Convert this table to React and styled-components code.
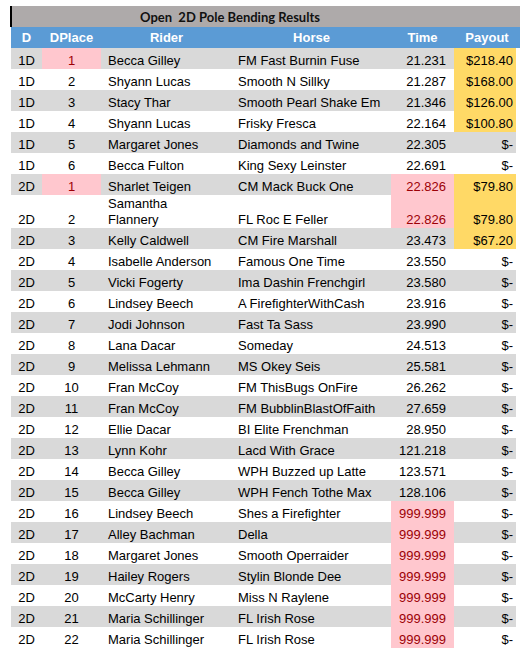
import React from 'react'
import styled, { createGlobalStyle } from 'styled-components'

const GlobalStyle = createGlobalStyle`
  body {
    margin: 0;
    background: #fff;
    font-family: "Liberation Sans", Arial, sans-serif;
  }
`

const COLS = '31px 59px 131px 159px 63px'

const Page = styled.div`
  padding: 6px 0 0 11px;
  width: 520px;
  box-sizing: border-box;
`

const Title = styled.div`
  height: 21px;
  margin-left: -1px;
  border-left: 2px solid #000;
  background: #aeaaaa;
  display: flex;
  align-items: center;
  padding-left: 128px;
  font-family: Lato, "Open Sans", sans-serif;
  font-weight: 700;
  font-size: 13px;
  color: #111;
  white-space: pre;
`

const HeadRow = styled.div`
  display: grid;
  grid-template-columns: ${COLS} 66px;
  height: 21px;
  background: #5b9bd5;
`

const HeadCell = styled.div`
  display: flex;
  align-items: center;
  justify-content: center;
  color: #fff;
  font-weight: 700;
  font-size: 13px;
  line-height: 16px;
`

const Row = styled.div`
  display: grid;
  grid-template-columns: ${COLS} 62px;
  width: 505px;
  height: ${p => (p.$tall ? 33 : 21)}px;
  background: ${p => (p.$shade ? '#d9d9d9' : '#fff')};
`

const Cell = styled.div`
  display: flex;
  align-items: flex-end;
  justify-content: ${p => p.$align || 'flex-start'};
  padding: ${p => p.$pad || '0'};
  font-size: 13px;
  line-height: 16px;
  color: ${p => (p.$mark === 'bad' ? '#9c0006' : '#000')};
  background: ${p =>
    p.$mark === 'bad' ? '#ffc7ce' : p.$mark === 'pay' ? '#ffd966' : 'transparent'};
  white-space: nowrap;
  overflow: hidden;
`

const RiderCell = styled(Cell)`
  flex-direction: column;
  align-items: flex-start;
  justify-content: flex-end;
`

const results = [
  ['1D', 1, 'Becca Gilley', 'FM Fast Burnin Fuse', '21.231', '$218.40'],
  ['1D', 2, 'Shyann Lucas', 'Smooth N Sillky', '21.287', '$168.00'],
  ['1D', 3, 'Stacy Thar', 'Smooth Pearl Shake Em', '21.346', '$126.00'],
  ['1D', 4, 'Shyann Lucas', 'Frisky Fresca', '22.164', '$100.80'],
  ['1D', 5, 'Margaret Jones', 'Diamonds and Twine', '22.305', null],
  ['1D', 6, 'Becca Fulton', 'King Sexy Leinster', '22.691', null],
  ['2D', 1, 'Sharlet Teigen', 'CM Mack Buck One', '22.826', '$79.80'],
  ['2D', 2, 'Samantha\nFlannery', 'FL Roc E Feller', '22.826', '$79.80'],
  ['2D', 3, 'Kelly Caldwell', 'CM Fire Marshall', '23.473', '$67.20'],
  ['2D', 4, 'Isabelle Anderson', 'Famous One Time', '23.550', null],
  ['2D', 5, 'Vicki Fogerty', 'Ima Dashin Frenchgirl', '23.580', null],
  ['2D', 6, 'Lindsey Beech', 'A FirefighterWithCash', '23.916', null],
  ['2D', 7, 'Jodi Johnson', 'Fast Ta Sass', '23.990', null],
  ['2D', 8, 'Lana Dacar', 'Someday', '24.513', null],
  ['2D', 9, 'Melissa Lehmann', 'MS Okey Seis', '25.581', null],
  ['2D', 10, 'Fran McCoy', 'FM ThisBugs OnFire', '26.262', null],
  ['2D', 11, 'Fran McCoy', 'FM BubblinBlastOfFaith', '27.659', null],
  ['2D', 12, 'Ellie Dacar', 'BI Elite Frenchman', '28.950', null],
  ['2D', 13, 'Lynn Kohr', 'Lacd With Grace', '121.218', null],
  ['2D', 14, 'Becca Gilley', 'WPH Buzzed up Latte', '123.571', null],
  ['2D', 15, 'Becca Gilley', 'WPH Fench Tothe Max', '128.106', null],
  ['2D', 16, 'Lindsey Beech', 'Shes a Firefighter', '999.999', null],
  ['2D', 17, 'Alley Bachman', 'Della', '999.999', null],
  ['2D', 18, 'Margaret Jones', 'Smooth Operraider', '999.999', null],
  ['2D', 19, 'Hailey Rogers', 'Stylin Blonde Dee', '999.999', null],
  ['2D', 20, 'McCarty Henry', 'Miss N Raylene', '999.999', null],
  ['2D', 21, 'Maria Schillinger', 'FL Irish Rose', '999.999', null],
  ['2D', 22, 'Maria Schillinger', 'FL Irish Rose', '999.999', null]
]

// ties and no-times get the red cell
const isBadTime = (t, i) => t === '999.999' || i === 6 || i === 7

export default function App () {
  return (
    <Page>
      <GlobalStyle />
      <Title>{'Open  2D Pole Bending Results'}</Title>
      <HeadRow>
        <HeadCell>D</HeadCell>
        <HeadCell>DPlace</HeadCell>
        <HeadCell>Rider</HeadCell>
        <HeadCell>Horse</HeadCell>
        <HeadCell>Time</HeadCell>
        <HeadCell>Payout</HeadCell>
      </HeadRow>
      {results.map(([d, place, rider, horse, time, pay], i) => {
        const lines = rider.split('\n')
        return (
          <Row key={i} $shade={i % 2 === 0} $tall={lines.length > 1}>
            <Cell $align='center'>{d}</Cell>
            <Cell $align='center' $mark={place === 1 ? 'bad' : null}>{place}</Cell>
            <RiderCell $pad='0 0 0 7px'>
              {lines.map((l, j) => <span key={j}>{l}</span>)}
            </RiderCell>
            <Cell $pad='0 0 0 6px'>{horse}</Cell>
            <Cell $align='flex-end' $pad='0 8px 0 0' $mark={isBadTime(time, i) ? 'bad' : null}>{time}</Cell>
            <Cell $align='flex-end' $pad='0 3px 0 0' $mark={pay ? 'pay' : null}>
              {pay || '$-'}
            </Cell>
          </Row>
        )
      })}
    </Page>
  )
}
